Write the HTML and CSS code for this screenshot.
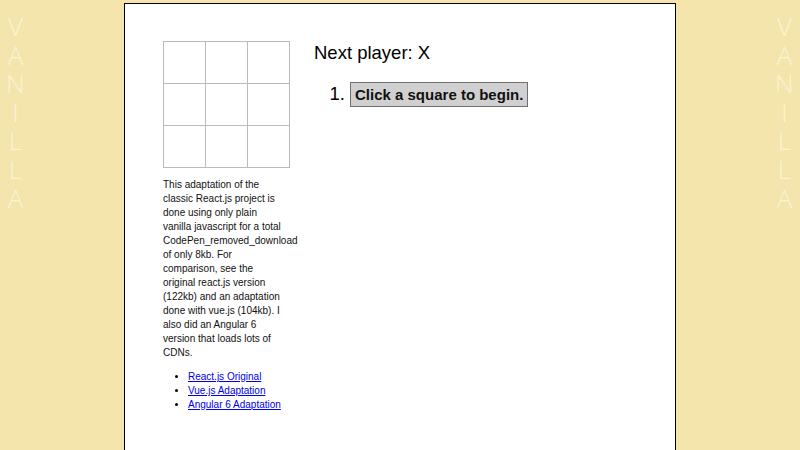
FILE: index.html
```html
<!DOCTYPE html>
<html lang="en">
<head>
<meta charset="utf-8">
<title>Vanilla Tic-Tac-Toe</title>
<link rel="stylesheet" href="styles.css">
</head>
<body>
  <div class="side side-left"><div class="vanilla">VANILLA</div></div>
  <main class="panel">
    <div class="game">
      <div class="game-board">
        <div class="board">
          <div class="square"></div><div class="square"></div><div class="square"></div>
          <div class="square"></div><div class="square"></div><div class="square"></div>
          <div class="square"></div><div class="square"></div><div class="square"></div>
        </div>
        <p class="about">This adaptation of the classic React.js project is done using only plain vanilla javascript for a total CodePen_removed_download of only 8kb. For comparison, see the original react.js version (122kb) and an adaptation done with vue.js (104kb). I also did an Angular 6 version that loads lots of CDNs.</p>
        <ul class="links">
          <li><a href="#">React.js Original</a></li>
          <li><a href="#">Vue.js Adaptation</a></li>
          <li><a href="#">Angular 6 Adaptation</a></li>
        </ul>
      </div>
      <div class="game-info">
        <div class="status">Next player: X</div>
        <ol class="moves">
          <li><button class="move">Click a square to begin.</button></li>
        </ol>
      </div>
    </div>
  </main>
  <div class="side side-right"><div class="vanilla">VANILLA</div></div>
</body>
</html>
```
FILE: styles.css
```css
html, body {
  margin: 0;
  padding: 0;
}
body {
  background: #f3e5ab;
  font-family: "Liberation Sans", Arial, sans-serif;
  color: #000;
  display: grid;
  grid-template-columns: 1fr 552px 1fr;
  min-height: 100vh;
}
.side {
  padding-top: 12px;
}
.side-left {
  justify-self: start;
  margin-left: 6px;
}
.side-right {
  justify-self: end;
  margin-right: 6px;
}
.vanilla {
  width: 19px;
  word-break: break-all;
  text-align: center;
  font-family: "Open Sans", "Liberation Sans", sans-serif;
  font-weight: 300;
  font-size: 26px;
  line-height: 28.6px;
  color: #faf3d6;
}
.panel {
  margin-top: 3px;
  background: #fff;
  border: 1px solid #000;
  padding: 37px 38px;
  min-height: 100vh;
}
.game {
  display: flex;
  align-items: flex-start;
}
.game-board {
  width: 121px;
  flex: none;
}
.board {
  display: grid;
  grid-template-columns: repeat(3, 42px);
  grid-template-rows: repeat(3, 42px);
  width: 127px;
  height: 127px;
}
.square {
  border: 1px solid #bbb;
  margin-right: -1px;
  margin-bottom: -1px;
  background: #fff;
}
.about {
  margin: 10px 0 10px;
  font-size: 10px;
  line-height: 14px;
  color: #111;
}
.links {
  margin: 10px 0 0;
  padding-left: 25px;
  font-size: 10px;
  line-height: 14px;
}
.links a {
  color: #0000ee;
}
.game-info {
  margin-left: 30px;
  padding-top: 1px;
}
.status {
  font-size: 18.5px;
}
.moves {
  margin: 18px 0 0;
  padding-left: 36px;
  font-size: 18.5px;
}
.move {
  font-family: "Liberation Sans", Arial, sans-serif;
  font-weight: bold;
  font-size: 15px;
  line-height: 17px;
  padding: 3px 4px;
  margin: 0;
  background: #d0d0d0;
  border: 1px solid #707070;
  color: #111;
}
```
